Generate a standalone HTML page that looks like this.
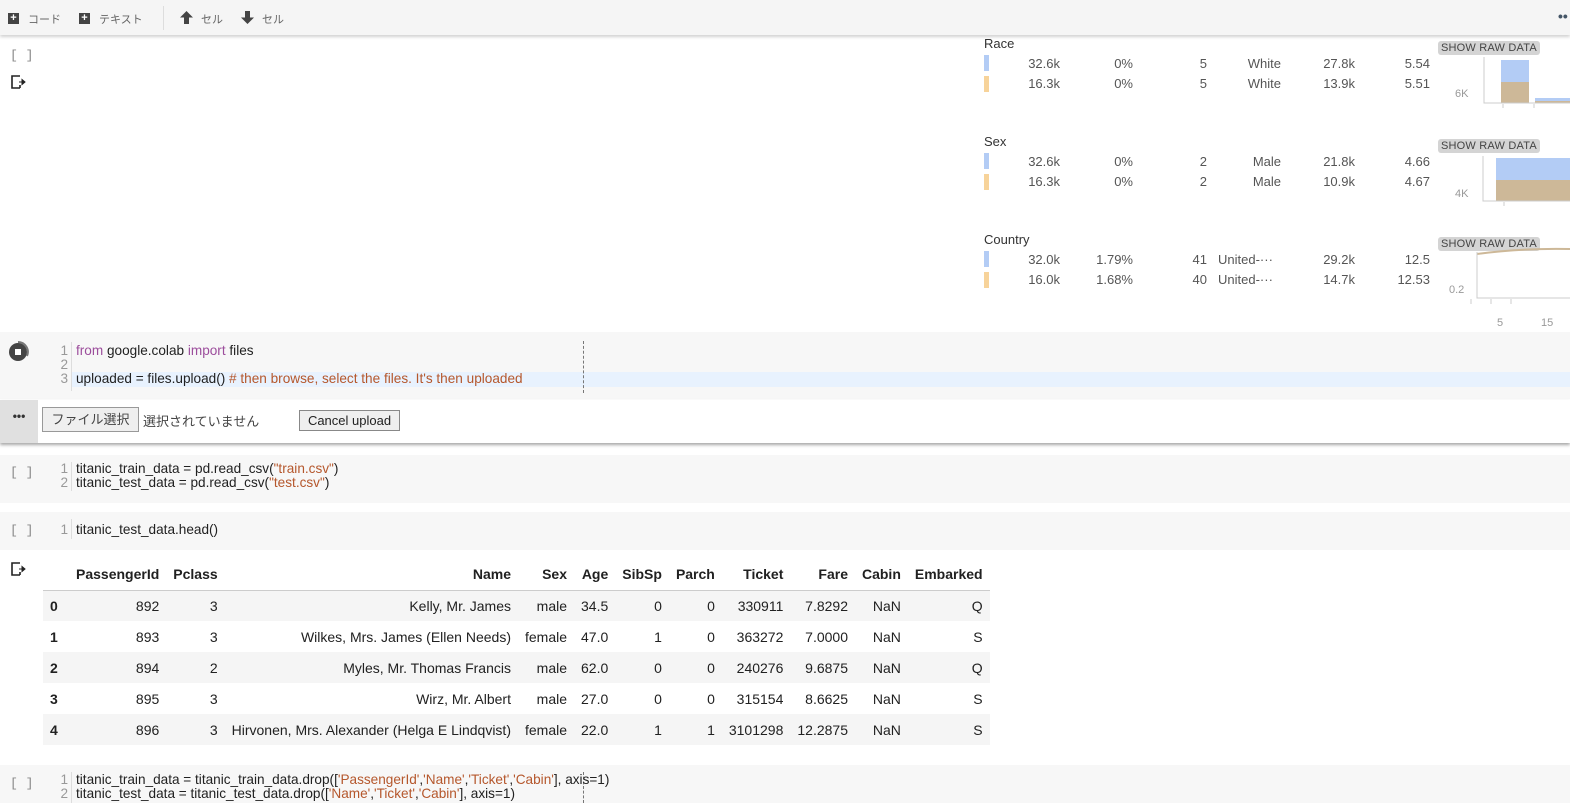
<!DOCTYPE html>
<html><head><meta charset="utf-8"><style>
*{margin:0;padding:0;box-sizing:border-box}
body{width:1570px;height:803px;overflow:hidden;background:#fff;font-family:"Liberation Sans","Noto Sans CJK JP",sans-serif;color:#212121;position:relative}
.a{position:absolute}
.tb{left:0;top:0;width:1570px;height:35px;background:#f5f5f5;box-shadow:0 2px 3px rgba(0,0,0,.18);font-size:11px;color:#666}
.pl{display:inline-block;width:11px;height:11px;background:#444;color:#fff;font-size:11px;line-height:11px;text-align:center;font-weight:bold}
.cell{left:0;width:1570px;background:#f7f7f7}
.br{color:#888;font-size:13px;font-family:"Liberation Mono",monospace}
.code{font-size:13.6px;line-height:14px;color:#212121;white-space:nowrap}
.ln{position:absolute;width:12px;text-align:right;color:#999}
.gut{position:absolute;border-left:1px solid #ddd}
.kw{color:#9c4d9c}.st{color:#b5572c}.cm{color:#b5572c}
.fl{font-size:13px;color:#333}
.fr{font-size:13px;color:#555;text-align:right}
.bar{width:5px;height:16px}
.btn{background:#d4d4d4;border-radius:3px;font-size:11px;color:#444;padding:1px 3px;letter-spacing:.2px}
table{border-collapse:collapse;font-size:14px}
td,th{text-align:right;padding:0 7px;height:31px;white-space:nowrap}
th{font-weight:bold}
thead th{border-bottom:1px solid #ccc;height:31px}
tbody tr:nth-child(odd){background:#f5f5f5}
tbody th{text-align:left}
</style></head><body>
<div class="a tb">
 <span class="a" style="left:8px;top:12px"><span class="pl">+</span></span><span class="a" style="left:28px;top:11px">コード</span>
 <span class="a" style="left:79px;top:12px"><span class="pl">+</span></span><span class="a" style="left:99px;top:11px">テキスト</span>
 <span class="a" style="left:163px;top:6px;width:1px;height:24px;background:#ddd"></span>
 <svg class="a" style="left:180px;top:11px" width="13" height="13" viewBox="0 0 13 13"><path d="M6.5 0L13 6.5H9V13H4V6.5H0Z" fill="#444"/></svg><span class="a" style="left:201px;top:11px">セル</span>
 <svg class="a" style="left:241px;top:11px" width="13" height="13" viewBox="0 0 13 13"><path d="M6.5 13L13 6.5H9V0H4V6.5H0Z" fill="#444"/></svg><span class="a" style="left:262px;top:11px">セル</span>
 <span class="a" style="left:1558px;top:8px;color:#456;font-size:14px;font-weight:bold">••</span>
</div>

<span class="a br" style="left:10px;top:48px">[ ]</span>
<svg class="a" style="left:11px;top:75px" width="16" height="14" viewBox="0 0 16 14"><path d="M9 1H1V13H9M9 10V13" fill="none" stroke="#222" stroke-width="1.6"/><path d="M8 7H13M11 4.5L14 7L11 9.5Z" fill="#222" stroke="#222" stroke-width="1"/></svg>

<div class="a fl" style="left:984px;top:36px">Race</div>
<div class="a fl" style="left:984px;top:134px">Sex</div>
<div class="a fl" style="left:984px;top:232px">Country</div>

<div class="a bar" style="left:984px;top:55px;background:#b3ccf5"></div><div class="a bar" style="left:984px;top:76px;background:#f7d39a"></div>
<div class="a bar" style="left:984px;top:153px;background:#b3ccf5"></div><div class="a bar" style="left:984px;top:174px;background:#f7d39a"></div>
<div class="a bar" style="left:984px;top:251px;background:#b3ccf5"></div><div class="a bar" style="left:984px;top:272px;background:#f7d39a"></div>

<div class="a fr" style="left:990px;top:56px;width:70px">32.6k</div><div class="a fr" style="left:1063px;top:56px;width:70px">0%</div><div class="a fr" style="left:1137px;top:56px;width:70px">5</div><div class="a fr" style="left:1211px;top:56px;width:70px">White</div><div class="a fr" style="left:1285px;top:56px;width:70px">27.8k</div><div class="a fr" style="left:1360px;top:56px;width:70px">5.54</div>
<div class="a fr" style="left:990px;top:76px;width:70px">16.3k</div><div class="a fr" style="left:1063px;top:76px;width:70px">0%</div><div class="a fr" style="left:1137px;top:76px;width:70px">5</div><div class="a fr" style="left:1211px;top:76px;width:70px">White</div><div class="a fr" style="left:1285px;top:76px;width:70px">13.9k</div><div class="a fr" style="left:1360px;top:76px;width:70px">5.51</div>
<div class="a fr" style="left:990px;top:154px;width:70px">32.6k</div><div class="a fr" style="left:1063px;top:154px;width:70px">0%</div><div class="a fr" style="left:1137px;top:154px;width:70px">2</div><div class="a fr" style="left:1211px;top:154px;width:70px">Male</div><div class="a fr" style="left:1285px;top:154px;width:70px">21.8k</div><div class="a fr" style="left:1360px;top:154px;width:70px">4.66</div>
<div class="a fr" style="left:990px;top:174px;width:70px">16.3k</div><div class="a fr" style="left:1063px;top:174px;width:70px">0%</div><div class="a fr" style="left:1137px;top:174px;width:70px">2</div><div class="a fr" style="left:1211px;top:174px;width:70px">Male</div><div class="a fr" style="left:1285px;top:174px;width:70px">10.9k</div><div class="a fr" style="left:1360px;top:174px;width:70px">4.67</div>
<div class="a fr" style="left:990px;top:252px;width:70px">32.0k</div><div class="a fr" style="left:1063px;top:252px;width:70px">1.79%</div><div class="a fr" style="left:1137px;top:252px;width:70px">41</div><div class="a" style="left:1218px;top:252px;font-size:13px;color:#555">United-···</div><div class="a fr" style="left:1285px;top:252px;width:70px">29.2k</div><div class="a fr" style="left:1360px;top:252px;width:70px">12.5</div>
<div class="a fr" style="left:990px;top:272px;width:70px">16.0k</div><div class="a fr" style="left:1063px;top:272px;width:70px">1.68%</div><div class="a fr" style="left:1137px;top:272px;width:70px">40</div><div class="a" style="left:1218px;top:272px;font-size:13px;color:#555">United-···</div><div class="a fr" style="left:1285px;top:272px;width:70px">14.7k</div><div class="a fr" style="left:1360px;top:272px;width:70px">12.53</div>

<div class="a btn" style="left:1438px;top:41px">SHOW RAW DATA</div>
<div class="a btn" style="left:1438px;top:139px">SHOW RAW DATA</div>
<div class="a btn" style="left:1438px;top:237px">SHOW RAW DATA</div>
<svg class="a" style="left:1440px;top:56px" width="130" height="274" viewBox="0 0 130 274">
 <rect x="61" y="4" width="28" height="43" fill="#b3ccf5"/><rect x="61" y="26" width="28" height="21" fill="#cdb898"/>
 <rect x="95" y="42" width="35" height="5" fill="#b3ccf5"/><rect x="95" y="45" width="35" height="2" fill="#cdb898"/>
 <rect x="56" y="102" width="74" height="43" fill="#b3ccf5"/><rect x="56" y="124" width="74" height="21" fill="#cdb898"/>
 <path d="M37 198Q80 192 130 193" stroke="#cdb898" stroke-width="2" fill="none"/>
 <g stroke="#ccc" stroke-width="1" fill="none">
  <path d="M44 1V47H130"/><path d="M43 100V145H130"/><path d="M37 196V242H130"/>
  <path d="M63 48V52M94 48V52M64 146V150M31 243V248M51 243V248M71 243V248"/>
 </g>
 <g font-size="11" fill="#999" font-family="Liberation Sans"><text x="15" y="41">6K</text><text x="15" y="141">4K</text><text x="9" y="237">0.2</text><text x="57" y="270">5</text><text x="101" y="270">15</text></g>
</svg>

<!-- cell 1 -->
<div class="a cell" style="top:332px;height:67px"></div>
<svg class="a" style="left:7px;top:341px" width="22" height="22" viewBox="0 0 22 22"><circle cx="11" cy="11" r="9" fill="#444"/><path d="M11 1A10 10 0 0 1 20 15" stroke="#777" stroke-width="2" fill="none"/><rect x="8" y="8" width="6" height="6" fill="#fff"/></svg>
<div class="a gut" style="left:71px;top:342px;height:49px"></div>
<div class="a" style="left:72px;top:372px;width:1498px;height:15px;background:#e8f2fe"></div>
<div class="a" style="left:583px;top:341px;height:52px;border-left:1px dashed #777"></div>
<div class="a code" style="left:56px;top:344px"><span class="ln" style="left:0">1</span><span class="ln" style="left:0;top:14px">2</span><span class="ln" style="left:0;top:28px">3</span></div>
<div class="a code" style="left:76px;top:344px"><span class="kw">from</span> google.colab <span class="kw">import</span> files<br><br>uploaded = files.upload() <span class="cm"># then browse, select the files. It's then uploaded</span></div>
<div class="a" style="left:0;top:400px;width:1570px;height:43px;background:#fff;box-shadow:0 2px 3px rgba(0,0,0,.35)"></div>
<div class="a" style="left:0;top:400px;width:38px;height:43px;background:#e0e0e0;font-size:12px;text-align:center;line-height:32px;font-weight:bold;color:#333">•••</div>
<div class="a" style="left:42px;top:407px;width:97px;height:25px;border:1px solid #999;background:#efefef;font-size:13px;color:#444;text-align:center;line-height:23px;white-space:nowrap">ファイル選択</div>
<div class="a" style="left:143px;top:411px;font-size:13px;color:#444;white-space:nowrap">選択されていません</div>
<div class="a" style="left:299px;top:410px;width:101px;height:21px;border:1px solid #888;background:#efefef;font-size:13px;color:#222;text-align:center;line-height:19px">Cancel upload</div>

<!-- cell 2 -->
<div class="a cell" style="top:455px;height:48px"></div>
<span class="a br" style="left:10px;top:465px">[ ]</span>
<div class="a gut" style="left:71px;top:462px;height:29px"></div>
<div class="a code" style="left:56px;top:462px"><span class="ln">1</span><span class="ln" style="top:14px">2</span></div>
<div class="a code" style="left:76px;top:462px">titanic_train_data = pd.read_csv(<span class="st">"train.csv"</span>)<br>titanic_test_data = pd.read_csv(<span class="st">"test.csv"</span>)</div>

<!-- cell 3 -->
<div class="a cell" style="top:512px;height:38px"></div>
<span class="a br" style="left:10px;top:523px">[ ]</span>
<div class="a gut" style="left:71px;top:519px;height:20px"></div>
<div class="a code" style="left:56px;top:523px"><span class="ln">1</span></div>
<div class="a code" style="left:76px;top:523px">titanic_test_data.head()</div>

<svg class="a" style="left:11px;top:562px" width="16" height="14" viewBox="0 0 16 14"><path d="M9 1H1V13H9M9 10V13" fill="none" stroke="#222" stroke-width="1.6"/><path d="M8 7H13M11 4.5L14 7L11 9.5Z" fill="#222" stroke="#222" stroke-width="1"/></svg>
<table class="a" style="left:43px;top:559px">
<thead><tr><th style="width:26px"></th><th>PassengerId</th><th>Pclass</th><th>Name</th><th>Sex</th><th>Age</th><th>SibSp</th><th>Parch</th><th>Ticket</th><th>Fare</th><th>Cabin</th><th>Embarked</th></tr></thead>
<tbody>
<tr><th>0</th><td>892</td><td>3</td><td>Kelly, Mr. James</td><td>male</td><td>34.5</td><td>0</td><td>0</td><td>330911</td><td>7.8292</td><td>NaN</td><td>Q</td></tr>
<tr><th>1</th><td>893</td><td>3</td><td>Wilkes, Mrs. James (Ellen Needs)</td><td>female</td><td>47.0</td><td>1</td><td>0</td><td>363272</td><td>7.0000</td><td>NaN</td><td>S</td></tr>
<tr><th>2</th><td>894</td><td>2</td><td>Myles, Mr. Thomas Francis</td><td>male</td><td>62.0</td><td>0</td><td>0</td><td>240276</td><td>9.6875</td><td>NaN</td><td>Q</td></tr>
<tr><th>3</th><td>895</td><td>3</td><td>Wirz, Mr. Albert</td><td>male</td><td>27.0</td><td>0</td><td>0</td><td>315154</td><td>8.6625</td><td>NaN</td><td>S</td></tr>
<tr><th>4</th><td>896</td><td>3</td><td>Hirvonen, Mrs. Alexander (Helga E Lindqvist)</td><td>female</td><td>22.0</td><td>1</td><td>1</td><td>3101298</td><td>12.2875</td><td>NaN</td><td>S</td></tr>
</tbody></table>

<!-- cell 4 -->
<div class="a cell" style="top:765px;height:38px"></div>
<span class="a br" style="left:10px;top:776px">[ ]</span>
<div class="a gut" style="left:71px;top:772px;height:31px"></div>
<div class="a" style="left:583px;top:772px;height:31px;border-left:1px dashed #777"></div>
<div class="a code" style="left:56px;top:773px"><span class="ln">1</span><span class="ln" style="top:14px">2</span></div>
<div class="a code" style="left:76px;top:773px">titanic_train_data = titanic_train_data.drop([<span class="st">'PassengerId'</span>,<span class="st">'Name'</span>,<span class="st">'Ticket'</span>,<span class="st">'Cabin'</span>], axis=1)<br>titanic_test_data = titanic_test_data.drop([<span class="st">'Name'</span>,<span class="st">'Ticket'</span>,<span class="st">'Cabin'</span>], axis=1)</div>
</body></html>
